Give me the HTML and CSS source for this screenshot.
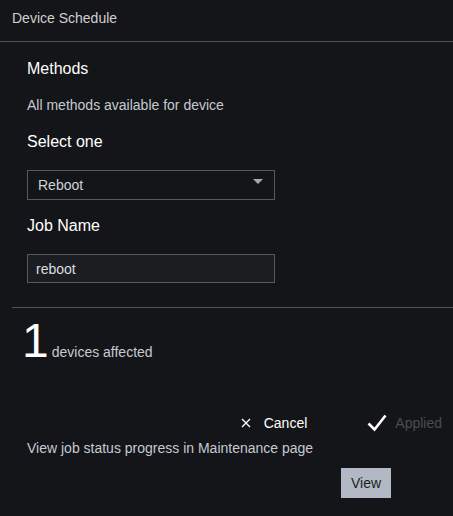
FILE: index.html
```html
<!DOCTYPE html>
<html lang="en">
<head>
  <meta charset="UTF-8">
  <meta name="viewport" content="width=device-width, initial-scale=1.0">
  <title>Device Schedule</title>
  <link rel="stylesheet" href="styles.css">
</head>
<body>
  <div class="header">Device Schedule</div>

  <div class="form">
    <h2 class="title">Methods</h2>
    <p class="hint">All methods available for device</p>

    <label class="title label-select">Select one</label>
    <div class="select">
      <span>Reboot</span>
      <span class="caret"></span>
    </div>

    <label class="title label-job" for="jobName">Job Name</label>
    <input type="text" id="jobName" class="text-input" value="reboot">
  </div>

  <div class="divider"></div>

  <div class="affected">
    <span class="count">1</span>
    <span class="affected-text">devices affected</span>
  </div>

  <div class="actions">
    <div class="action cancel">
      <svg width="10" height="10" viewBox="0 0 10 10">
        <path d="M1 1 L9 9 M9 1 L1 9" stroke="#fff" stroke-width="1.3" fill="none"/>
      </svg>
      <span>Cancel</span>
    </div>
    <div class="action applied">
      <svg width="20" height="18" viewBox="0 0 20 18">
        <path d="M1.5 9.5 L7.5 15.5 L18.5 1.5" stroke="#fff" stroke-width="2.6" fill="none"/>
      </svg>
      <span>Applied</span>
    </div>
  </div>

  <p class="hint status">View job status progress in Maintenance page</p>

  <button class="view-btn">View</button>
</body>
</html>
```

FILE: styles.css
```css
* {
  box-sizing: border-box;
}

body {
  margin: 0;
  background-color: #141518;
  font-family: "Liberation Sans", Arial, sans-serif;
  color: #fff;
}

.header {
  height: 42px;
  padding: 10px 12px 0;
  font-size: 14px;
  line-height: 16px;
  color: #d0d0d0;
  border-bottom: 1px solid #505154;
}

.form {
  padding: 0 27px;
  width: 302px;
}

.title {
  display: block;
  margin: 17px 0 0;
  font-size: 16px;
  font-weight: normal;
  line-height: 20px;
  color: #fff;
}

.hint {
  margin: 18px 0 0;
  font-size: 14px;
  line-height: 16px;
  color: #c5cad2;
}

.label-select {
  margin-top: 19px;
}

.select {
  display: flex;
  align-items: center;
  justify-content: space-between;
  height: 30px;
  margin-top: 18px;
  padding: 0 11px 0 10px;
  border: 1px solid #57585b;
  font-size: 14px;
  color: #cfd2d8;
}

.caret {
  width: 0;
  height: 0;
  margin-top: -7px;
  border-left: 5px solid transparent;
  border-right: 5px solid transparent;
  border-top: 5px solid #a9a9ab;
}

.label-job {
  margin-top: 16px;
}

.text-input {
  display: block;
  width: 100%;
  height: 29px;
  margin-top: 18px;
  padding: 0 8px;
  background: #1c1d20;
  border: 1px solid #57585b;
  font-family: inherit;
  font-size: 14px;
  color: #dcdde0;
  outline: none;
}

.divider {
  margin: 24px 0 0 12px;
  border-top: 1px solid #505154;
}

.affected {
  display: flex;
  align-items: baseline;
  margin-top: 9px;
  padding-left: 22px;
}

.count {
  margin-right: 3px;
  font-size: 48px;
  line-height: 48px;
  color: #fff;
}

.affected-text {
  font-size: 14px;
  color: #c5cad2;
}

.actions {
  display: flex;
  justify-content: flex-end;
  gap: 60px;
  margin-top: 48px;
  padding-right: 11px;
}

.action {
  display: flex;
  align-items: center;
  height: 20px;
  font-size: 14px;
  line-height: 20px;
}

.cancel {
  gap: 13px;
  color: #fff;
}

.applied {
  gap: 8px;
  color: #4a4c51;
}

.status {
  margin: 7px 0 0 27px;
}

.view-btn {
  display: block;
  width: 50px;
  height: 30px;
  margin: 12px 0 0 341px;
  padding: 0;
  border: none;
  background: #b2b9c4;
  font-family: inherit;
  font-size: 14px;
  color: #1c1d22;
}
```
